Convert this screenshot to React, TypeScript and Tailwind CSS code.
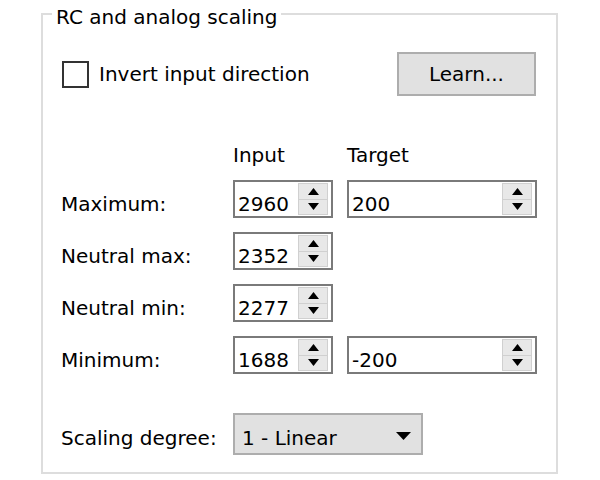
import React from "react";

type SpinProps = {
  value: string;
  width: string;
};

function Arrow({ up }: { up: boolean }) {
  return (
    <svg width="11" height="7" viewBox="0 0 11 7" className="block">
      {up ? <polygon points="0,7 11,7 5.5,0" fill="#000" /> : <polygon points="0,0 11,0 5.5,7" fill="#000" />}
    </svg>
  );
}

function SpinBox({ value, width }: SpinProps) {
  return (
    <div className={`flex h-[38px] border-2 border-[#7a7a7a] bg-white ${width}`}>
      <span className="flex-1 pl-[3px] pt-[8px] leading-[28px]">{value}</span>
      <div className="mr-[3px] flex w-[30px] flex-col py-[1px]">
        <div className="flex flex-1 items-center justify-center border border-[#d0d0d0] bg-[#e8e8e8]">
          <Arrow up />
        </div>
        <div className="flex flex-1 items-center justify-center border border-t-0 border-[#d0d0d0] bg-[#e8e8e8]">
          <Arrow up={false} />
        </div>
      </div>
    </div>
  );
}

const rows = [
  { label: "Maximum:", input: "2960", target: "200" },
  { label: "Neutral max:", input: "2352" },
  { label: "Neutral min:", input: "2277" },
  { label: "Minimum:", input: "1688", target: "-200" },
];

export default function App() {
  return (
    <div
      className="h-[480px] w-[600px] bg-white pl-[41px] text-[20px] text-black"
      style={{ fontFamily: '"DejaVu Sans", Tahoma, sans-serif' }}
    >
      <fieldset className="h-[474px] w-[517px] border-2 border-[#dddddd] p-0">
        <legend className="ml-[9px] px-[4px] pt-[6px] leading-[22px]">RC and analog scaling</legend>

        {/* checkbox + learn */}
        <div className="mt-[24px] flex h-[44px] items-center justify-between">
          <label className="ml-[19px] flex items-center">
            <span className="h-[27px] w-[27px] border-2 border-[#333333] bg-white"></span>
            <span className="ml-[10px] leading-[28px]">Invert input direction</span>
          </label>
          <button className="mr-[20px] flex h-[44px] w-[139px] items-center justify-center border-2 border-[#adadad] bg-[#e1e1e1] leading-[28px]">
            Learn...
          </button>
        </div>

        {/* table */}
        <div className="ml-[18px] mt-[45px] grid grid-cols-[158px_100px_190px] gap-x-[14px] leading-[28px]">
          <span></span>
          <span>Input</span>
          <span>Target</span>
        </div>
        <div className="ml-[18px] mt-[11px] grid grid-cols-[158px_100px_190px] gap-x-[14px] gap-y-[14px]">
          {rows.map((r) => (
            <React.Fragment key={r.label}>
              <span className="h-[38px] pt-[10px] leading-[28px]">{r.label}</span>
              <SpinBox value={r.input} width="w-[100px]" />
              {r.target ? <SpinBox value={r.target} width="w-[190px]" /> : <span></span>}
            </React.Fragment>
          ))}
        </div>

        {/* scaling degree */}
        <div className="ml-[18px] mt-[39px] flex">
          <span className="w-[172px] pt-[11px] leading-[28px]">Scaling degree:</span>
          <div className="flex h-[42px] w-[190px] items-start justify-between border-2 border-[#adadad] bg-[#e1e1e1]">
            <span className="pl-[7px] pt-[9px] leading-[28px]">1 - Linear</span>
            <svg width="15" height="8" viewBox="0 0 15 8" className="mr-[10px] mt-[17px]">
              <polygon points="0,0 15,0 7.5,8" fill="#000" />
            </svg>
          </div>
        </div>
      </fieldset>
    </div>
  );
}
